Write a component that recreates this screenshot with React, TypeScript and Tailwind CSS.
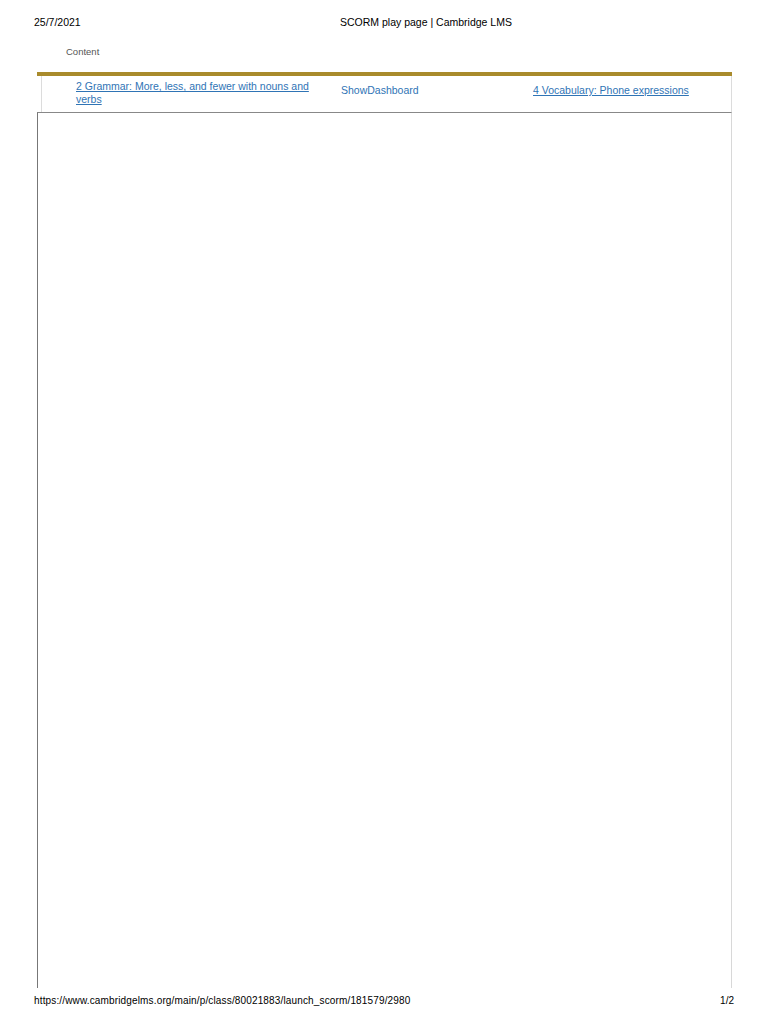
export default function App() {
  return (
    <div className="relative w-[768px] h-[1024px] bg-white overflow-hidden" style={{ fontFamily: '"Liberation Sans", Arial, sans-serif' }}>
      <div className="flex items-start pt-[16px] pl-[34px] pr-[34px] h-[46px] text-[10.5px] text-black leading-[12px]">
        <div className="w-[306px]">25/7/2021</div>
        <div>SCORM play page | Cambridge LMS</div>
      </div>
      <div className="pl-[66px] text-[9.5px] text-[#555] leading-[12px] h-[26px]">Content</div>
      <div className="ml-[37px] w-[695px]">
        <div className="h-[4px] bg-[#a98b2c]" />
        <div className="ml-[4px] h-[36px] border-l border-r border-[#dcdcdc] flex items-start text-[10.5px] leading-[13px] text-[#2f74b5]">
          <div className="w-[279px] pl-[34px] pr-[2px] pt-[4px]">
            <span className="underline">2 Grammar: More, less, and fewer with nouns and verbs</span>
          </div>
          <div className="w-[212px] pl-[20px] pt-[8px]">ShowDashboard</div>
          <div className="pt-[8px]">
            <span className="underline">4 Vocabulary: Phone expressions</span>
          </div>
        </div>
        <div className="h-[876px] border-t border-t-[#888] border-l border-l-[#777] border-r border-r-[#d8d8d8]" />
      </div>
      <div className="flex justify-between pl-[34px] pr-[34px] pt-[7px] text-[10px] leading-[12px] text-black">
        <div className="tracking-[0.15px]">https://www.cambridgelms.org/main/p/class/80021883/launch_scorm/181579/2980</div>
        <div>1/2</div>
      </div>
    </div>
  );
}
